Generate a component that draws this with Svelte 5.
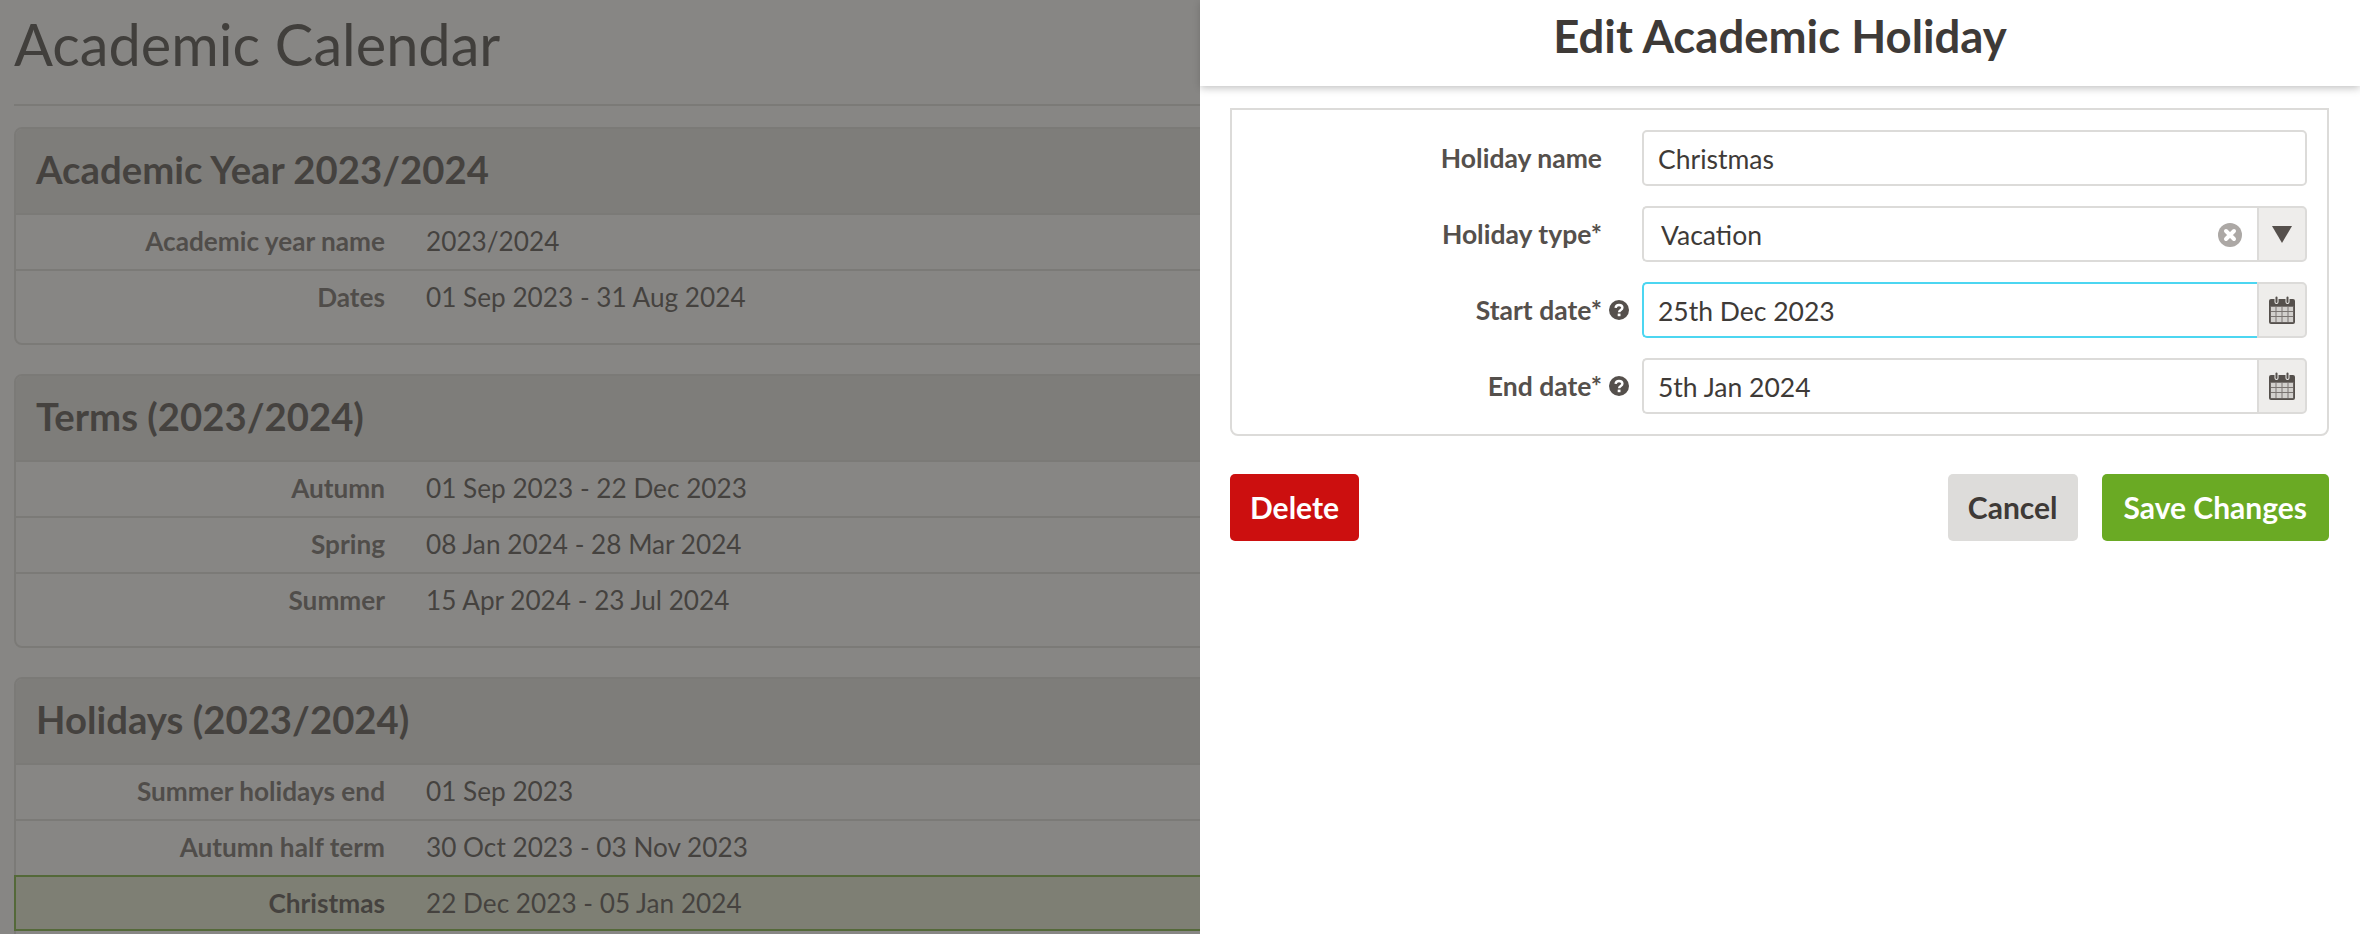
<script>
  const cards = [
    {
      title: "Academic Year 2023/2024",
      rows: [
        { label: "Academic year name", value: "2023/2024" },
        { label: "Dates", value: "01 Sep 2023 - 31 Aug 2024" }
      ]
    },
    {
      title: "Terms (2023/2024)",
      rows: [
        { label: "Autumn", value: "01 Sep 2023 - 22 Dec 2023" },
        { label: "Spring", value: "08 Jan 2024 - 28 Mar 2024" },
        { label: "Summer", value: "15 Apr 2024 - 23 Jul 2024" }
      ]
    },
    {
      title: "Holidays (2023/2024)",
      rows: [
        { label: "Summer holidays end", value: "01 Sep 2023" },
        { label: "Autumn half term", value: "30 Oct 2023 - 03 Nov 2023" },
        { label: "Christmas", value: "22 Dec 2023 - 05 Jan 2024", selected: true }
      ]
    }
  ];
</script>

{#snippet calendar()}
  <svg class="cal" viewBox="0 0 26 28" width="26" height="28">
    <path d="M2 3h22a2 2 0 0 1 2 2v21a2 2 0 0 1-2 2H2a2 2 0 0 1-2-2V5a2 2 0 0 1 2-2z" fill="#55504c" />
    <rect x="1.5" y="10" width="23" height="16.5" fill="#7a7572" />
    <g fill="#d2d0cd">
      <rect x="2" y="11" width="4.5" height="4" />
      <rect x="7.5" y="11" width="5" height="4" />
      <rect x="13.5" y="11" width="5" height="4" />
      <rect x="19.5" y="11" width="4.5" height="4" />
      <rect x="2" y="16" width="4.5" height="4" />
      <rect x="7.5" y="16" width="5" height="4" />
      <rect x="13.5" y="16" width="5" height="4" />
      <rect x="19.5" y="16" width="4.5" height="4" />
      <rect x="2" y="21" width="4.5" height="5" />
      <rect x="7.5" y="21" width="5" height="5" />
      <rect x="13.5" y="21" width="5" height="5" />
      <rect x="19.5" y="21" width="4.5" height="5" />
    </g>
    <rect x="5.5" y="0" width="4" height="8" rx="2" fill="#eeedeb" />
    <rect x="16.5" y="0" width="4" height="8" rx="2" fill="#eeedeb" />
    <rect x="6.5" y="0.5" width="2" height="6.5" rx="1" fill="#55504c" />
    <rect x="17.5" y="0.5" width="2" height="6.5" rx="1" fill="#55504c" />
  </svg>
{/snippet}

{#snippet help()}
  <svg class="help" viewBox="0 0 20 20" width="20" height="20">
    <circle cx="10" cy="10" r="10" fill="#55504c" />
    <path d="M6.6 7.8c.2-1.9 1.6-2.8 3.4-2.8 1.9 0 3.4 1 3.4 2.7 0 2.3-3.2 2.3-3.3 4.6" fill="none" stroke="#fff" stroke-width="2.4" />
    <rect x="8.7" y="13.6" width="2.8" height="2.6" fill="#fff" />
  </svg>
{/snippet}

<div class="screen">
  <div class="behind">
    <div class="page">
      <h1>Academic Calendar</h1>
      {#each cards as card}
        <section class="card">
          <h2>{card.title}</h2>
          {#each card.rows as row}
            <div class="row" class:selected={row.selected}>
              <span class="key">{row.label}</span>
              <span class="val">{row.value}</span>
            </div>
          {/each}
        </section>
      {/each}
    </div>
    <div class="overlay"></div>
  </div>

  <aside class="panel">
    <header>Edit Academic Holiday</header>
    <div class="body">
      <form class="box">
        <label for="name">Holiday name</label>
        <div class="field"><div class="control" id="name">Christmas</div></div>

        <label for="type">Holiday type*</label>
        <div class="field">
          <div class="control select" id="type">
            <span>Vacation</span>
            <svg class="clear" viewBox="0 0 24 24" width="24" height="24">
              <circle cx="12" cy="12" r="12" fill="#aca8a5" />
              <path d="M8 8l8 8M16 8l-8 8" stroke="#fff" stroke-width="4" stroke-linecap="round" />
            </svg>
          </div>
          <div class="addon">
            <svg viewBox="0 0 20 17" width="20" height="17"><path d="M0 0h20L10 17z" fill="#55504c" /></svg>
          </div>
        </div>

        <label for="start">Start date* {@render help()}</label>
        <div class="field">
          <div class="control focus" id="start">25th Dec 2023</div>
          <div class="addon">{@render calendar()}</div>
        </div>

        <label for="end">End date* {@render help()}</label>
        <div class="field">
          <div class="control" id="end">5th Jan 2024</div>
          <div class="addon">{@render calendar()}</div>
        </div>
      </form>

      <div class="actions">
        <button class="delete" type="button">Delete</button>
        <span class="spacer"></span>
        <button class="cancel" type="button">Cancel</button>
        <button class="save" type="button">Save Changes</button>
      </div>
    </div>
  </aside>
</div>

<style>
  :global(body) {
    margin: 0;
    background: #fff;
  }

  .screen {
    display: flex;
    height: 934px;
    overflow: hidden;
    font-family: "Lato", "Liberation Sans", sans-serif;
    color: #3e3a37;
  }

  .behind {
    position: relative;
    width: 1200px;
    flex: none;
    overflow: hidden;
  }

  .page {
    width: 1600px;
    padding: 0 14px;
    box-sizing: border-box;
  }

  .overlay {
    position: absolute;
    inset: 0;
    background: rgba(73, 71, 69, 0.66);
  }

  h1 {
    margin: 0 0 21px;
    height: 106px;
    box-sizing: border-box;
    border-bottom: 2px solid #dcdbd9;
    font-size: 57.7px;
    font-weight: 400;
    line-height: 88px;
    color: #34302d;
  }

  .card {
    border: 2px solid #dcdbd9;
    border-radius: 8px;
    margin-bottom: 29px;
    padding-bottom: 18px;
  }

  h2 {
    margin: 0;
    height: 84px;
    padding: 0 20px;
    background: #e4e3e1;
    font-size: 38.3px;
    font-weight: 700;
    line-height: 80px;
    border-radius: 6px 6px 0 0;
    color: #3e3a37;
  }

  .row {
    display: flex;
    height: 54px;
    border-top: 2px solid #dcdbd9;
    font-size: 26.2px;
    line-height: 52px;
  }

  .key {
    width: 369px;
    flex: none;
    text-align: right;
    font-weight: 700;
    color: #5f5a57;
  }

  .val {
    margin-left: 41px;
  }

  .row.selected {
    margin-left: -2px;
    background: #e4eacf;
    outline: 2px solid #6aaa24;
    outline-offset: -2px;
  }

  .row.selected .key {
    width: 371px;
    color: #3e3a37;
  }

  .panel {
    flex: 1;
    background: #fff;
  }

  header {
    height: 86px;
    background: #fff;
    box-shadow: 0 2px 8px rgba(0, 0, 0, 0.25);
    text-align: center;
    font-size: 45.5px;
    font-weight: 700;
    line-height: 72px;
  }

  .body {
    padding: 22px 31px 0 30px;
  }

  .box {
    display: grid;
    grid-template-columns: 370px 1fr;
    column-gap: 40px;
    row-gap: 20px;
    padding: 20px 20px 20px 0;
    border: 2px solid #dcdbd9;
    border-radius: 0 0 8px 8px;
    align-items: center;
  }

  label {
    display: flex;
    justify-content: flex-end;
    align-items: center;
    gap: 7px;
    font-size: 26.5px;
    font-weight: 700;
    color: #55504c;
    position: relative;
  }

  label:has(.help) {
    margin-right: -27px;
  }

  .field {
    display: flex;
    height: 56px;
  }

  .control {
    flex: 1;
    display: flex;
    align-items: center;
    justify-content: space-between;
    box-sizing: border-box;
    padding: 2px 14px 0;
    border: 2px solid #dcdbd9;
    border-radius: 5px;
    font-size: 26.5px;
    color: #3e3a37;
    background: #fff;
  }

  .field:has(.addon) .control {
    border-radius: 5px 0 0 5px;
    border-right: 0;
  }

  .control.focus {
    border: 2px solid #4cd6f1;
  }

  .field:has(.addon) .control.focus {
    border-right: 0;
  }

  .select {
    padding-left: 17px;
    padding-right: 15px;
  }

  .addon {
    width: 50px;
    flex: none;
    box-sizing: border-box;
    display: flex;
    align-items: center;
    justify-content: center;
    background: #eeedeb;
    border: 2px solid #dcdbd9;
    border-radius: 0 5px 5px 0;
  }

  .actions {
    display: flex;
    gap: 24px;
    margin-top: 38px;
  }

  .spacer {
    flex: 1;
  }

  button {
    height: 67px;
    border: none;
    border-radius: 5px;
    padding: 0 20px 2px;
    font-family: inherit;
    font-size: 30px;
    font-weight: 700;
  }

  .delete {
    background: #cc0f0f;
    color: #fff;
  }

  .cancel {
    background: #dddcda;
    color: #3e3a37;
  }

  .save {
    padding: 0 22px 2px;
    background: #6aaa24;
    color: #fff;
  }
</style>
